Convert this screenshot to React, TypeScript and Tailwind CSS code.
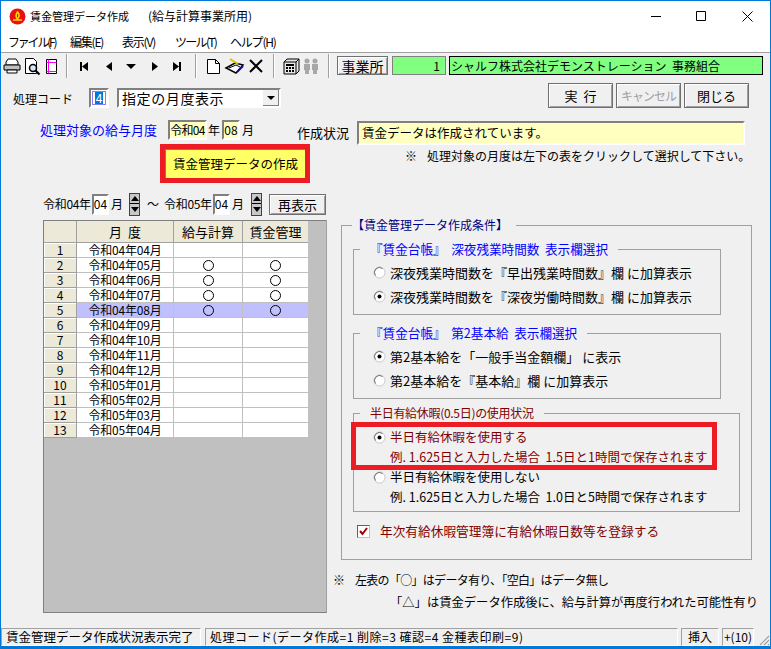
import type { ReactNode } from "react";

const font = { fontFamily: '"Noto Sans CJK JP", "Liberation Sans", sans-serif' };

const rows = [
  ["1", "令和04年04月", false],
  ["2", "令和04年05月", true],
  ["3", "令和04年06月", true],
  ["4", "令和04年07月", true],
  ["5", "令和04年08月", true],
  ["6", "令和04年09月", false],
  ["7", "令和04年10月", false],
  ["8", "令和04年11月", false],
  ["9", "令和04年12月", false],
  ["10", "令和05年01月", false],
  ["11", "令和05年02月", false],
  ["12", "令和05年03月", false],
  ["13", "令和05年04月", false],
] as const;

function Btn({ children, className = "" }: { children: ReactNode; className?: string }) {
  return (
    <div className={`flex items-center justify-center whitespace-nowrap border border-[#707070] bg-[#f0f0f0] shadow-[inset_1px_1px_0_#fff,inset_-1px_-1px_0_#a0a0a0] ${className}`}>
      {children}
    </div>
  );
}

function Sunken({ children, className = "" }: { children: ReactNode; className?: string }) {
  return (
    <div className={`flex items-center whitespace-nowrap border-2 border-t-[#808080] border-l-[#808080] border-r-white border-b-white ${className}`}>
      {children}
    </div>
  );
}

function Spin() {
  return (
    <div className="flex h-[23px] w-[11px] flex-col border border-[#404040] bg-[#c8c8c8]">
      <div className="flex h-[10px] items-center justify-center border-b border-black">
        <div className="h-0 w-0 border-x-[4px] border-b-[5px] border-x-transparent border-b-black" />
      </div>
      <div className="flex flex-1 items-center justify-center">
        <div className="h-0 w-0 border-x-[4px] border-t-[5px] border-x-transparent border-t-black" />
      </div>
    </div>
  );
}

function Radio({ on, children, className = "" }: { on?: boolean; children: ReactNode; className?: string }) {
  return (
    <div className={`flex h-[24px] items-center ${className}`}>
      <svg width="13" height="13" viewBox="0 0 13 13" className="mr-[4px] shrink-0">
        <circle cx="6.5" cy="6.5" r="5.5" fill="#fff" stroke="#c8c8c8" />
        <path d="M2.5 9.5a5 5 0 0 1 7-7" fill="none" stroke="#707070" />
        {on && <circle cx="6.5" cy="6.5" r="2" fill="#000" />}
      </svg>
      <span className="whitespace-nowrap">{children}</span>
    </div>
  );
}

function Group({ title, titleClass, className = "", children }: { title: string; titleClass: string; className?: string; children: ReactNode }) {
  return (
    <div className={`relative border border-[#a0a0a0] ${className}`}>
      <div className={`absolute top-[-10px] bg-[#f0f0f0] leading-[18px] whitespace-pre ${titleClass}`}>{title}</div>
      {children}
    </div>
  );
}

function Sep() {
  return <div className="mx-[6px] h-[24px] w-[2px] border-l border-[#a0a0a0] bg-white" />;
}

function Tool({ children, w = 23 }: { children: ReactNode; w?: number }) {
  return (
    <svg width={w} height="20" viewBox={`0 0 ${w} 20`} className="shrink-0">
      {children}
    </svg>
  );
}

function Toolbar() {
  return (
    <div className="flex h-[26px] items-center border-t border-[#a0a0a0] bg-[#f0f0f0] pl-[2px] text-[12px]">
      <Tool w={18}>
        <path d="M5 3h8l2 3v3H3V6z" fill="#fff" stroke="#000" />
        <path d="M1 9h16v5H1z" fill="#c0c0c0" stroke="#000" />
        <path d="M4 14h10v3H4z" fill="#fff" stroke="#000" />
      </Tool>
      <Tool w={21}>
        <path d="M4.500 2.500h8l3 3v12h-11z" fill="#fff" stroke="#000" />
        <circle cx="12" cy="12" r="3.500" fill="#cfe8ff" stroke="#000" strokeWidth="1.500" />
        <path d="M14.500 14.500l4 4" stroke="#000" strokeWidth="2" />
      </Tool>
      <Tool w={18}>
        <path d="M4.500 3.500h10v14h-10z" fill="#fff" stroke="#000" />
        <path d="M6.500 3.500v14M4.500 6.500h10M4.500 15.500h10" stroke="#f0f" fill="none" />
      </Tool>
      <Sep />
      <Tool w={23}><path d="M6 6h2v9H6zM14 6v9l-6-4.500z" /></Tool>
      <Tool w={23}><path d="M15 6v9l-6-4.500z" /></Tool>
      <Tool w={23}><path d="M6 8h10l-5 5z" /></Tool>
      <Tool w={23}><path d="M9 6v9l6-4.500z" /></Tool>
      <Tool w={23}><path d="M7 6v9l6-4.500zM13 6h2v9h-2z" /></Tool>
      <Sep />
      <Tool w={21}>
        <path d="M4.500 3.500h8l4 4v10h-12z" fill="#fff" stroke="#000" />
        <path d="M12.500 3.500v4h4" fill="none" stroke="#000" />
      </Tool>
      <Tool w={24}>
        <path d="M2 12l9-5 8 2-7 8z" fill="#fff" stroke="#000" strokeWidth="1.500" />
        <path d="M5 12l7-3 4 2" fill="none" stroke="#000" />
        <path d="M6 3l8 5" stroke="#d4c400" strokeWidth="2" />
        <path d="M13 16l6-6" stroke="#1010a0" strokeWidth="2" />
      </Tool>
      <Tool w={19}>
        <path d="M2 4l12 12M14 4L2 16" stroke="#000" strokeWidth="2" />
      </Tool>
      <Sep />
      <Tool w={20}>
        <path d="M3 6l3-3h12v12l-3 3H3z" fill="#e8e8e8" stroke="#000" />
        <path d="M3 6h12v12M15 6l3-3" fill="none" stroke="#000" />
        <path d="M5 8h8v2H5zM5 11h2v2H5zM8 11h2v2H8zM11 11h2v2h-2zM5 14h2v2H5zM8 14h2v2H8zM11 14h2v2h-2z" />
      </Tool>
      <Tool w={21}>
        <g fill="#a8a8a8">
          <circle cx="6" cy="5" r="2.500" />
          <circle cx="14" cy="5" r="2.500" />
          <path d="M3 8h6v6H8v4H4v-4H3zM11 8h6v6h-1v4h-4v-4h-1z" />
        </g>
      </Tool>
      <Sep />
      <Btn className="ml-[1px] h-[19px] w-[51px] text-[14px]">事業所</Btn>
      <div className="ml-[4px] flex h-[19px] w-[54px] items-center justify-end border border-[#808080] bg-[#80ff80] pr-[5px]">1</div>
      <div className="ml-[3px] flex h-[19px] w-[314px] items-center border border-black bg-[#80ff80] pl-[1px] whitespace-nowrap">シャルフ株式会社デモンストレーション&nbsp;&nbsp;事務組合</div>
    </div>
  );
}

function Circle() {
  return <div className="h-[11px] w-[11px] rounded-full border border-black" />;
}

function MonthGrid() {
  return (
    <div className="ml-[42px] mt-[4px] h-[393px] w-[284px] border border-[#808080] border-r-[#a0a0a0] bg-[#c0c0c0] text-[12px] leading-none">
      <div className="flex h-[22px]">
        <div className="w-[33px] border-r border-b border-[#a0a0a0] bg-[#ece9d8]" />
        <div className="flex w-[97px] items-center justify-center border-r border-b border-[#a0a0a0] bg-[#ece9d8] text-[13px]">月&nbsp;&nbsp;度</div>
        <div className="flex w-[69px] items-center justify-center border-r border-b border-[#a0a0a0] bg-[#ece9d8] text-[13px]">給与計算</div>
        <div className="flex w-[65px] items-center justify-center border-b border-[#a0a0a0] bg-[#ece9d8] text-[13px]">賃金管理</div>
      </div>
      {rows.map(([no, label, done]) => {
        const bg = no === "5" ? "bg-[#c0c0ff]" : "bg-white";
        return (
          <div key={no} className="flex h-[15px]">
            <div className="flex w-[33px] items-center justify-center border-r border-b border-[#a0a0a0] bg-[#ece9d8] shadow-[inset_1px_1px_0_#fff]">{no}</div>
            <div className={`flex w-[97px] items-center justify-center border-r border-b border-[#c0c0c0] tracking-[-0.2px] ${bg}`}>{label}</div>
            <div className={`flex w-[69px] items-center justify-center border-r border-b border-[#c0c0c0] ${bg}`}>{done && <Circle />}</div>
            <div className={`flex w-[65px] items-center justify-center border-b border-[#c0c0c0] ${bg}`}>{done && <Circle />}</div>
          </div>
        );
      })}
    </div>
  );
}

export default function App() {
  const cell = "flex h-full items-center whitespace-nowrap border border-t-[#a0a0a0] border-l-[#a0a0a0] border-r-white border-b-white";
  return (
    <div style={font} className="flex h-[649px] w-[771px] flex-col overflow-hidden border border-b-[3px] border-[#0078d7] bg-[#f0f0f0] text-[13px] leading-none text-black">
      {/* title + menu */}
      <div className="flex h-[30px] items-center bg-white pl-[8px] text-[11px]">
        <svg width="17" height="17" viewBox="0 0 17 17" className="mr-[4px]">
          <circle cx="8.500" cy="8.500" r="8" fill="#e81010" />
          <path d="M4 12h9M8.500 4c2 2 2.500 4 0 7c-2-2-2-4 0-7z" stroke="#ffd800" fill="none" strokeWidth="1.500" />
        </svg>
        <span>賃金管理データ作成</span>
        <span className="ml-[19px] text-[12px]">(給与計算事業所用)</span>
        <div className="ml-auto flex items-center">
          <svg width="11" height="11" viewBox="0 0 11 11" className="mr-[34px]"><path d="M0 5.500h10" stroke="#000" /></svg>
          <svg width="11" height="11" viewBox="0 0 11 11" className="mr-[35px]"><path d="M.5.500h9v9h-9z" fill="none" stroke="#000" /></svg>
          <svg width="11" height="11" viewBox="0 0 11 11" className="mr-[17px]"><path d="M.5.500l10 10M10.500.500l-10 10" stroke="#000" /></svg>
        </div>
      </div>
      <div className="flex h-[21px] items-center bg-white pl-[7px] text-[12px] tracking-[-1.2px] whitespace-nowrap">
        <span className="w-[62px] tracking-[-2.2px]">ファイル(F)</span>
        <span className="w-[52px]">編集(E)</span>
        <span className="w-[53px]">表示(V)</span>
        <span className="w-[55px] tracking-[-1.7px]">ツール(T)</span>
        <span>ヘルプ(H)</span>
      </div>
      <Toolbar />

      {/* code row */}
      <div className="flex h-[30px] items-end">
        <span className="mb-[3px] ml-[12px] w-[76px] text-[12px]">処理コード</span>
        <Sunken className="h-[20px] w-[20px] justify-center bg-white">
          <div className="flex h-[14px] w-[14px] items-center justify-center border border-[#8080ff]">
            <span className="bg-[#0078d7] px-[1px] text-[12px] text-white">4</span>
          </div>
        </Sunken>
        <Sunken className="ml-[8px] h-[20px] w-[164px] bg-white pl-[3px]">
          <span className="text-[14px] tracking-[0.6px]">指定の月度表示</span>
          <div className="ml-auto flex h-[16px] w-[16px] items-center justify-center bg-[#f0f0f0] shadow-[inset_-1px_-1px_0_#808080]">
            <div className="h-0 w-0 border-x-[4px] border-t-[4px] border-x-transparent border-t-black" />
          </div>
        </Sunken>
        <Btn className="ml-[267px] h-[25px] w-[65px]">実&nbsp;&nbsp;行</Btn>
        <Btn className="ml-[3px] h-[25px] w-[65px] text-[12px] tracking-[-1px] text-[#a0a0a0]">キャンセル</Btn>
        <Btn className="ml-[3px] h-[25px] w-[65px]">閉じる</Btn>
      </div>

      {/* target month + status */}
      <div className="mt-[11px] flex h-[66px]">
        <div className="w-[296px]">
          <div className="flex h-[21px] items-center">
            <span className="ml-[39px] w-[128px] text-[#0000ff]">処理対象の給与月度</span>
            <Sunken className="h-[20px] w-[39px] justify-center bg-[#ffffc0] text-[12px] tracking-[-0.7px]">令和04</Sunken>
            <span className="ml-[1px] w-[14px] text-[12px]">年</span>
            <Sunken className="h-[20px] w-[18px] justify-center bg-[#ffffc0] text-[12px]">08</Sunken>
            <span className="ml-[2px] text-[12px]">月</span>
          </div>
          <div className="relative ml-[164px] mt-[9px] flex h-[29px] w-[140px] items-center justify-center whitespace-nowrap border-t border-l border-[#808080] bg-[#ffff66] text-[12.5px]">
            賃金管理データの作成
            <div className="absolute -left-[6px] -right-[5px] -top-[6px] -bottom-[5px] border-[5px] border-[#ed1c24]" />
          </div>
        </div>
        <div className="flex-1">
          <div className="flex items-center">
            <span className="w-[60px]">作成状況</span>
            <Sunken className="mt-[2px] h-[24px] w-[388px] bg-[#ffffc0] pl-[3px] text-[12.5px]">賃金データは作成されています。</Sunken>
          </div>
          <div className="mt-[5px] ml-[108px] flex text-[12px] whitespace-nowrap">
            <span className="w-[22px]">※</span>
            <span>処理対象の月度は左下の表をクリックして選択して下さい。</span>
          </div>
        </div>
      </div>

      {/* lower part */}
      <div className="flex flex-1">
        <div className="w-[340px]">
          <div className="mt-[7px] flex h-[24px] items-center text-[12px] whitespace-nowrap">
            <span className="ml-[42px] w-[49px] tracking-[-0.3px]">令和04年</span>
            <Sunken className="h-[21px] w-[17px] justify-center bg-white">04</Sunken>
            <span className="ml-[2px] w-[18px]">月</span>
            <Spin />
            <span className="ml-[7px] w-[17px]">～</span>
            <span className="w-[49px] tracking-[-0.3px]">令和05年</span>
            <Sunken className="h-[21px] w-[17px] justify-center bg-white">04</Sunken>
            <span className="ml-[2px] w-[19px]">月</span>
            <Spin />
            <Btn className="ml-[7px] h-[21px] w-[57px] text-[13px]">再表示</Btn>
          </div>
          <MonthGrid />
        </div>
        <div className="flex-1">
          <Group title="【賃金管理データ作成条件】" titleClass="left-[10px] pr-[8px] text-[12px] text-[#000080]" className="mt-[40px] h-[335px] w-[411px] text-[13px]">
            <Group title="『賃金台帳』  深夜残業時間数  表示欄選択" titleClass="left-[6px] px-[10px] text-[12.6px] text-[#0000ff]" className="ml-[11px] mt-[23px] h-[66px] w-[368px] pl-[19px] pt-[10px]">
              <Radio>深夜残業時間数を『早出残業時間数』欄 に加算表示</Radio>
              <Radio on>深夜残業時間数を『深夜労働時間数』欄 に加算表示</Radio>
            </Group>
            <Group title="『賃金台帳』  第2基本給  表示欄選択" titleClass="left-[6px] px-[10px] text-[12.6px] text-[#0000ff]" className="ml-[11px] mt-[18px] h-[66px] w-[368px] pl-[19px] pt-[10px]">
              <Radio on>第2基本給を「一般手当金額欄」 に表示</Radio>
              <Radio>第2基本給を『基本給』欄 に加算表示</Radio>
            </Group>
            <Group title="半日有給休暇(0.5日)の使用状況" titleClass="left-[6px] px-[10px] text-[12px] tracking-[-0.3px] text-[#800000]" className="ml-[11px] mt-[14px] h-[99px] w-[387px] pl-[19px] pt-[11px] text-[12.5px]">
              <Radio on className="text-[#800000]">半日有給休暇を使用する</Radio>
              <div className="h-[16px] whitespace-nowrap pl-[17px] leading-[16px] text-[#800000]">例. 1.625日と入力した場合&nbsp;&nbsp;1.5日と1時間で保存されます</div>
              <Radio>半日有給休暇を使用しない</Radio>
              <div className="h-[16px] whitespace-nowrap pl-[17px] leading-[16px]">例. 1.625日と入力した場合&nbsp;&nbsp;1.0日と5時間で保存されます</div>
              <div className="absolute left-[-3px] top-[8px] h-[48px] w-[366px] border-[5px] border-[#ed1c24]" />
            </Group>
            <div className="ml-[15px] mt-[13px] flex items-center text-[12.7px] text-[#800000]">
              <div className="mr-[10px] flex h-[13px] w-[13px] items-center justify-center border border-t-[#606060] border-l-[#606060] border-r-[#c0c0c0] border-b-[#c0c0c0] bg-white">
                <svg width="9" height="9" viewBox="0 0 9 9"><path d="M1 4l2.500 3L8 1" fill="none" stroke="#a00000" strokeWidth="2" /></svg>
              </div>
              年次有給休暇管理簿に有給休暇日数等を登録する
            </div>
          </Group>
          <div className="ml-[-8px] mt-[14px] flex whitespace-nowrap text-[12px]">
            <span className="w-[22px]">※</span>
            <span className="tracking-[-0.7px]">左表の「○」はデータ有り、「空白」はデータ無し</span>
          </div>
          <div className="ml-[49px] mt-[10px] whitespace-nowrap text-[12.3px]">「△」は賃金データ作成後に、給与計算が再度行われた可能性有り</div>
        </div>
      </div>

      {/* status bar */}
      <div className="flex h-[18px] items-center text-[12px]">
        <div className={`${cell} w-[200px] pl-[4px] text-[12.5px]`}>賃金管理データ作成状況表示完了</div>
        <div className={`${cell} ml-[4px] w-[473px] pl-[4px] tracking-[0.5px]`}>処理コード(データ作成=1 削除=3 確認=4 金種表印刷=9)</div>
        <div className={`${cell} ml-[3px] w-[38px] justify-center`}>挿入</div>
        <div className={`${cell} ml-[3px] w-[32px] justify-center`}>+(10)</div>
        <svg width="12" height="12" viewBox="0 0 12 12" className="ml-auto self-end">
          <path d="M11 2L2 11M11 6l-5 5M11 10l-1 1" stroke="#a0a0a0" strokeWidth="1.200" />
        </svg>
      </div>
    </div>
  );
}
